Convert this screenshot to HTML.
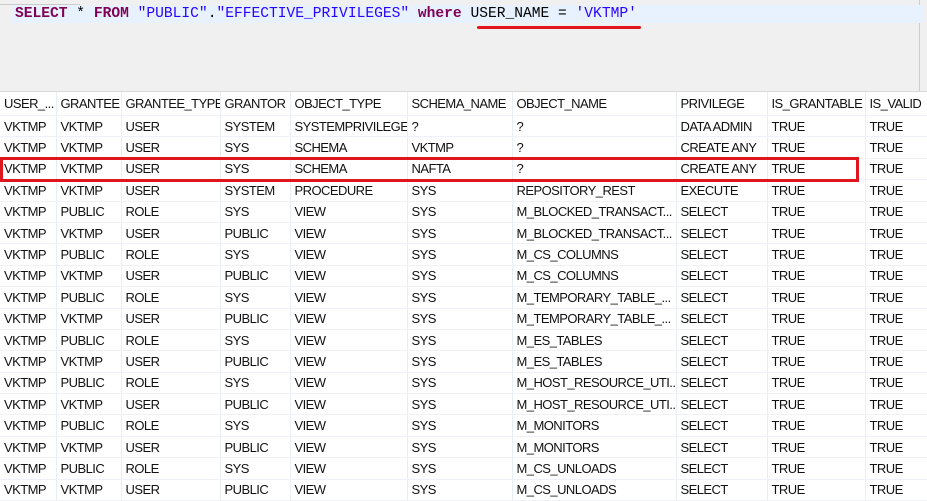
<!DOCTYPE html><html><head><style>
body{margin:0;width:927px;height:487px;overflow:hidden;background:#fff;font-family:"Liberation Sans",sans-serif;position:relative}
.top{position:absolute;left:0;top:0;width:927px;height:91px;background:#f0f0f0;border-bottom:1px solid #d9d9d9}
.sql{position:absolute;left:12px;top:5px;width:908px;height:18px;background:#e8f2fe;font-family:"Liberation Mono",monospace;font-size:14.6px;line-height:18px;padding-left:3px;white-space:pre}
.k{color:#7f0055;font-weight:bold}.s{color:#2a00ff}
table{position:absolute;left:0;top:92px;width:927px;border-collapse:collapse;color:#111;table-layout:fixed}
td{height:20.4px;padding:0 0 0 4px;border-right:1px solid #e8eef4;border-bottom:1px solid #eef2f6;white-space:nowrap;overflow:hidden;font-size:13px;letter-spacing:-0.55px}
tr:first-child td{height:23px}
</style></head><body>
<div class="top"><div style="position:absolute;left:0;top:0;width:80px;height:4px;border-bottom:1px solid #ccc"></div><div style="position:absolute;left:919px;top:0;width:1px;height:91px;background:#ccc"></div></div>
<div class="sql"><span class="k">SELECT</span> * <span class="k">FROM</span> <span class="s">"PUBLIC"</span>.<span class="s">"EFFECTIVE_PRIVILEGES"</span> <span class="k">where</span> USER_NAME = <span class="s">'VKTMP'</span></div>
<div style="position:absolute;left:477px;top:26px;width:164px;height:3px;background:#e0161e;border-radius:2px"></div>
<table>
<colgroup><col style="width:56px"><col style="width:65px"><col style="width:99px"><col style="width:70px"><col style="width:117px"><col style="width:105px"><col style="width:164px"><col style="width:91px"><col style="width:98px"><col style="width:62px"></colgroup>
<tr><td>USER_...</td><td>GRANTEE</td><td>GRANTEE_TYPE</td><td>GRANTOR</td><td>OBJECT_TYPE</td><td>SCHEMA_NAME</td><td>OBJECT_NAME</td><td>PRIVILEGE</td><td>IS_GRANTABLE</td><td>IS_VALID</td></tr>
<tr><td>VKTMP</td><td>VKTMP</td><td>USER</td><td>SYSTEM</td><td>SYSTEMPRIVILEGE</td><td>?</td><td>?</td><td>DATA ADMIN</td><td>TRUE</td><td>TRUE</td></tr>
<tr><td>VKTMP</td><td>VKTMP</td><td>USER</td><td>SYS</td><td>SCHEMA</td><td>VKTMP</td><td>?</td><td>CREATE ANY</td><td>TRUE</td><td>TRUE</td></tr>
<tr><td>VKTMP</td><td>VKTMP</td><td>USER</td><td>SYS</td><td>SCHEMA</td><td>NAFTA</td><td>?</td><td>CREATE ANY</td><td>TRUE</td><td>TRUE</td></tr>
<tr><td>VKTMP</td><td>VKTMP</td><td>USER</td><td>SYSTEM</td><td>PROCEDURE</td><td>SYS</td><td>REPOSITORY_REST</td><td>EXECUTE</td><td>TRUE</td><td>TRUE</td></tr>
<tr><td>VKTMP</td><td>PUBLIC</td><td>ROLE</td><td>SYS</td><td>VIEW</td><td>SYS</td><td>M_BLOCKED_TRANSACT...</td><td>SELECT</td><td>TRUE</td><td>TRUE</td></tr>
<tr><td>VKTMP</td><td>VKTMP</td><td>USER</td><td>PUBLIC</td><td>VIEW</td><td>SYS</td><td>M_BLOCKED_TRANSACT...</td><td>SELECT</td><td>TRUE</td><td>TRUE</td></tr>
<tr><td>VKTMP</td><td>PUBLIC</td><td>ROLE</td><td>SYS</td><td>VIEW</td><td>SYS</td><td>M_CS_COLUMNS</td><td>SELECT</td><td>TRUE</td><td>TRUE</td></tr>
<tr><td>VKTMP</td><td>VKTMP</td><td>USER</td><td>PUBLIC</td><td>VIEW</td><td>SYS</td><td>M_CS_COLUMNS</td><td>SELECT</td><td>TRUE</td><td>TRUE</td></tr>
<tr><td>VKTMP</td><td>PUBLIC</td><td>ROLE</td><td>SYS</td><td>VIEW</td><td>SYS</td><td>M_TEMPORARY_TABLE_...</td><td>SELECT</td><td>TRUE</td><td>TRUE</td></tr>
<tr><td>VKTMP</td><td>VKTMP</td><td>USER</td><td>PUBLIC</td><td>VIEW</td><td>SYS</td><td>M_TEMPORARY_TABLE_...</td><td>SELECT</td><td>TRUE</td><td>TRUE</td></tr>
<tr><td>VKTMP</td><td>PUBLIC</td><td>ROLE</td><td>SYS</td><td>VIEW</td><td>SYS</td><td>M_ES_TABLES</td><td>SELECT</td><td>TRUE</td><td>TRUE</td></tr>
<tr><td>VKTMP</td><td>VKTMP</td><td>USER</td><td>PUBLIC</td><td>VIEW</td><td>SYS</td><td>M_ES_TABLES</td><td>SELECT</td><td>TRUE</td><td>TRUE</td></tr>
<tr><td>VKTMP</td><td>PUBLIC</td><td>ROLE</td><td>SYS</td><td>VIEW</td><td>SYS</td><td>M_HOST_RESOURCE_UTI...</td><td>SELECT</td><td>TRUE</td><td>TRUE</td></tr>
<tr><td>VKTMP</td><td>VKTMP</td><td>USER</td><td>PUBLIC</td><td>VIEW</td><td>SYS</td><td>M_HOST_RESOURCE_UTI...</td><td>SELECT</td><td>TRUE</td><td>TRUE</td></tr>
<tr><td>VKTMP</td><td>PUBLIC</td><td>ROLE</td><td>SYS</td><td>VIEW</td><td>SYS</td><td>M_MONITORS</td><td>SELECT</td><td>TRUE</td><td>TRUE</td></tr>
<tr><td>VKTMP</td><td>VKTMP</td><td>USER</td><td>PUBLIC</td><td>VIEW</td><td>SYS</td><td>M_MONITORS</td><td>SELECT</td><td>TRUE</td><td>TRUE</td></tr>
<tr><td>VKTMP</td><td>PUBLIC</td><td>ROLE</td><td>SYS</td><td>VIEW</td><td>SYS</td><td>M_CS_UNLOADS</td><td>SELECT</td><td>TRUE</td><td>TRUE</td></tr>
<tr><td>VKTMP</td><td>VKTMP</td><td>USER</td><td>PUBLIC</td><td>VIEW</td><td>SYS</td><td>M_CS_UNLOADS</td><td>SELECT</td><td>TRUE</td><td>TRUE</td></tr>
</table>
<div style="position:absolute;left:0;top:157px;width:853px;height:19px;border:3px solid #e0161e"></div>
</body></html>
